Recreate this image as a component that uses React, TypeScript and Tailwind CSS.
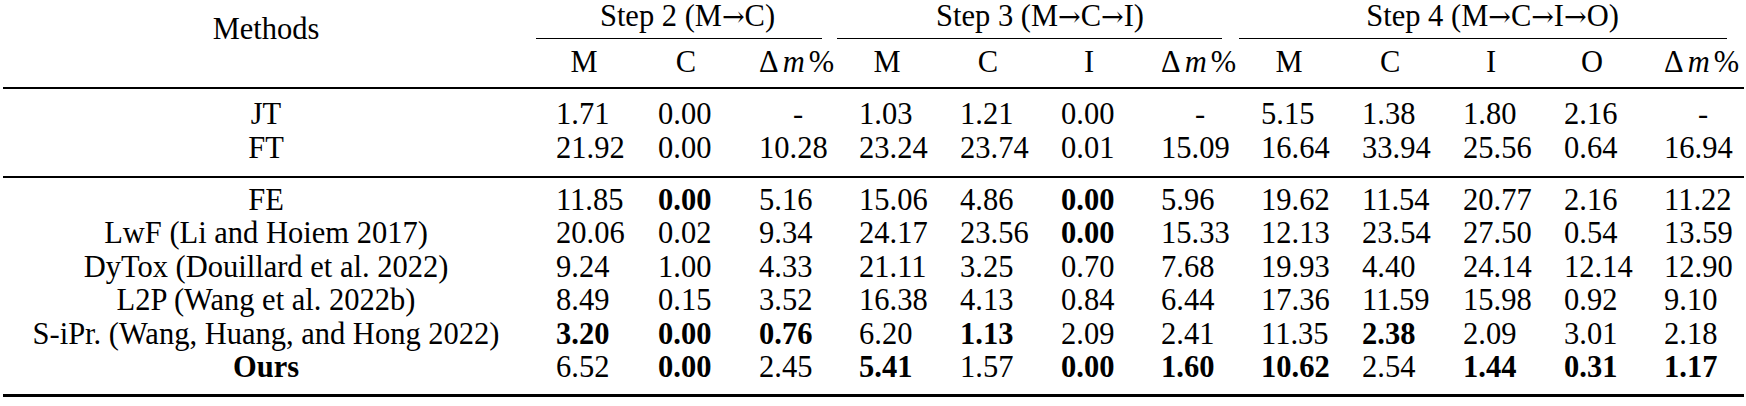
const heads = ["M", "C", "Δ", "M", "C", "I", "Δ", "M", "C", "I", "O", "Δ"];

const colWidths = [
  "w-[102px]", "w-[101px]", "w-[100px]", "w-[101px]", "w-[101px]", "w-[100px]",
  "w-[100px]", "w-[101px]", "w-[101px]", "w-[101px]", "w-[100px]", "w-[100px]",
];

// "*" marks a bold value
const baseline = [
  { name: "JT", vals: ["1.71", "0.00", "-", "1.03", "1.21", "0.00", "-", "5.15", "1.38", "1.80", "2.16", "-"] },
  { name: "FT", vals: ["21.92", "0.00", "10.28", "23.24", "23.74", "0.01", "15.09", "16.64", "33.94", "25.56", "0.64", "16.94"] },
];

const methods = [
  { name: "FE", vals: ["11.85", "*0.00", "5.16", "15.06", "4.86", "*0.00", "5.96", "19.62", "11.54", "20.77", "2.16", "11.22"] },
  { name: "LwF (Li and Hoiem 2017)", vals: ["20.06", "0.02", "9.34", "24.17", "23.56", "*0.00", "15.33", "12.13", "23.54", "27.50", "0.54", "13.59"] },
  { name: "DyTox (Douillard et al. 2022)", vals: ["9.24", "1.00", "4.33", "21.11", "3.25", "0.70", "7.68", "19.93", "4.40", "24.14", "12.14", "12.90"] },
  { name: "L2P (Wang et al. 2022b)", vals: ["8.49", "0.15", "3.52", "16.38", "4.13", "0.84", "6.44", "17.36", "11.59", "15.98", "0.92", "9.10"] },
  { name: "S-iPr. (Wang, Huang, and Hong 2022)", vals: ["*3.20", "*0.00", "*0.76", "6.20", "*1.13", "2.09", "2.41", "11.35", "*2.38", "2.09", "3.01", "2.18"] },
  { name: "Ours", bold: true, vals: ["6.52", "*0.00", "2.45", "*5.41", "1.57", "*0.00", "*1.60", "*10.62", "2.54", "*1.44", "*0.31", "*1.17"] },
];

function Arrow() {
  return <span className="[font-family:DejaVu_Serif,serif] text-[27px]">→</span>;
}

function Delta() {
  return (
    <span>
      Δ<i className="mx-[4px]">m</i>%
    </span>
  );
}

function ValueCell({ v }: { v: string }) {
  if (v === "-") {
    return (
      <td className="p-0 pl-[20px]">
        <div className="w-[78px] text-center">-</div>
      </td>
    );
  }
  const bold = v.startsWith("*");
  return (
    <td className={`p-0 pl-[20px] text-left whitespace-nowrap ${bold ? "font-bold" : ""}`}>
      {bold ? v.slice(1) : v}
    </td>
  );
}

function Row({ name, vals, bold }: { name: string; vals: string[]; bold?: boolean }) {
  return (
    <tr className="leading-[33.5px] h-[33.5px]">
      <td className={`p-0 pr-[7px] text-center whitespace-nowrap ${bold ? "font-bold" : ""}`}>{name}</td>
      {vals.map((v, i) => (
        <ValueCell key={i} v={v} />
      ))}
    </tr>
  );
}

function Spacer({ h }: { h: string }) {
  return (
    <tr>
      <td colSpan={13} className={`p-0 leading-none ${h}`} />
    </tr>
  );
}

function Rule({ h }: { h: string }) {
  return (
    <tr>
      <td colSpan={13} className="p-0 leading-none">
        <div className={`${h} bg-black`} />
      </td>
    </tr>
  );
}

export default function App() {
  return (
    <div className="w-[1746px] h-[406px] bg-white overflow-hidden font-[Liberation_Serif,Times_New_Roman,serif] text-[30.5px] text-black">
      <table className="ml-[3px] w-[1741px] table-fixed border-collapse">
        <colgroup>
          <col className="w-[533px]" />
          {colWidths.map((w, i) => (
            <col key={i} className={w} />
          ))}
        </colgroup>
        <thead>
          <tr>
            <th rowSpan={2} className="p-0 pr-[7px] align-top font-normal">
              <div className="pt-[13px] leading-[33px] text-center">Methods</div>
            </th>
            <th colSpan={3} className="p-0 align-top font-normal">
              <div className="leading-[33px] text-center whitespace-nowrap">
                Step 2 (M<Arrow />C)
              </div>
              <div className="mt-[5px] h-px bg-black mr-[17px]" />
            </th>
            <th colSpan={4} className="p-0 align-top font-normal">
              <div className="leading-[33px] text-center whitespace-nowrap">
                Step 3 (M<Arrow />C<Arrow />I)
              </div>
              <div className="mt-[5px] h-px bg-black -ml-[2px] mr-[19px]" />
            </th>
            <th colSpan={5} className="p-0 align-top font-normal">
              <div className="leading-[33px] text-center whitespace-nowrap">
                Step 4 (M<Arrow />C<Arrow />I<Arrow />O)
              </div>
              <div className="mt-[5px] h-px bg-black -ml-[2px] mr-[17px]" />
            </th>
          </tr>
          <tr>
            {heads.map((h, i) => (
              <th key={i} className="p-0 pl-[20px] pt-[7px] pb-[8px] leading-[33px] font-normal text-left">
                {h === "Δ" ? (
                  <div className="whitespace-nowrap">
                    <Delta />
                  </div>
                ) : (
                  <div className="w-[56px] text-center">{h}</div>
                )}
              </th>
            ))}
          </tr>
        </thead>
        <tbody>
          <Rule h="h-[2px]" />
          <Spacer h="h-[9px]" />
          {baseline.map((r) => (
            <Row key={r.name} name={r.name} vals={r.vals} />
          ))}
          <Spacer h="h-[10.5px]" />
          <Rule h="h-[2px]" />
          <Spacer h="h-[6px]" />
          {methods.map((r) => (
            <Row key={r.name} name={r.name} vals={r.vals} bold={r.bold} />
          ))}
          <Spacer h="h-[9.5px]" />
          <Rule h="h-[3px]" />
        </tbody>
      </table>
    </div>
  );
}
